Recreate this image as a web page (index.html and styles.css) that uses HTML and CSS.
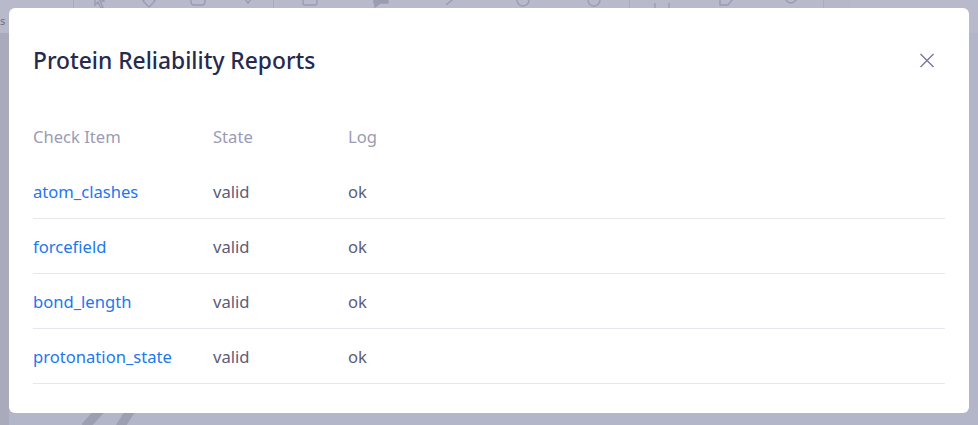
FILE: index.html
```html
<!DOCTYPE html>
<html lang="en">
<head>
  <meta charset="UTF-8" />
  <meta name="viewport" content="width=device-width, initial-scale=1.0"/>
  <title>Protein Reliability Reports</title>
  <link rel="stylesheet" href="styles.css">
</head>
<body>

  <!-- App behind the dialog -->
  <div class="app">
    <div class="toolbar">
      <div class="side-tab">s</div>
      <div class="tool-group first">
        <svg class="tool" viewBox="0 0 20 20"><path d="M6 2 L6 14 L9 11 L12 17 L14 16 L11 10 L15 10 Z"/></svg>
        <svg class="tool" viewBox="0 0 20 20"><path d="M4 10 L10 4 L16 10 L10 16 Z"/></svg>
        <svg class="tool" viewBox="0 0 20 20"><rect x="3" y="6" width="14" height="8" rx="3"/></svg>
        <svg class="tool" viewBox="0 0 20 20"><path d="M3 3 L17 3 L10 12 Z"/></svg>
      </div>
      <div class="tool-group second">
        <svg class="tool" viewBox="0 0 20 20"><rect x="3" y="5" width="14" height="9" rx="2"/></svg>
        <svg class="tool filled" viewBox="0 0 20 20"><path d="M3 4 L17 4 L17 12 L9 12 L4 16 L4 12 L3 12 Z"/></svg>
        <svg class="tool" viewBox="0 0 20 20"><path d="M4 14 L16 4"/></svg>
        <svg class="tool" viewBox="0 0 20 20"><circle cx="10" cy="9" r="6"/></svg>
        <svg class="tool" viewBox="0 0 20 20"><circle cx="10" cy="9" r="6"/></svg>
      </div>
      <div class="tool-group third">
        <svg class="tool" viewBox="0 0 20 20"><path d="M3 3 L3 8 M3 3 L8 3 M17 3 L17 8 M17 3 L12 3 M3 17 L3 12 M17 17 L17 12"/></svg>
        <svg class="tool" viewBox="0 0 20 20"><path d="M4 4 L12 4 L16 9 L12 14 L4 14 Z"/></svg>
        <svg class="tool" viewBox="0 0 20 20"><path d="M4 8 Q10 16 16 8 Q10 2 4 8"/></svg>
      </div>
      <div class="tool-group tail"></div>
    </div>
    <div class="canvas">
      <div class="side-panel"></div>
      <svg class="bonds" viewBox="0 0 160 40">
        <path d="M85 42 L110 14"/>
        <path d="M120 42 L138 14"/>
      </svg>
    </div>
  </div>

  <!-- Dialog -->
  <div class="modal">
    <div class="modal-header">
      <h2>Protein Reliability Reports</h2>
      <button class="close" aria-label="Close">
        <svg viewBox="0 0 16 16"><path d="M1.5 1.5 L14.5 14.5 M14.5 1.5 L1.5 14.5"/></svg>
      </button>
    </div>
    <table class="report">
      <thead>
        <tr><th class="col-item">Check Item</th><th class="col-state">State</th><th>Log</th></tr>
      </thead>
      <tbody>
        <tr><td><a href="#">atom_clashes</a></td><td>valid</td><td>ok</td></tr>
        <tr><td><a href="#">forcefield</a></td><td>valid</td><td>ok</td></tr>
        <tr><td><a href="#">bond_length</a></td><td>valid</td><td>ok</td></tr>
        <tr><td><a href="#">protonation_state</a></td><td>valid</td><td>ok</td></tr>
      </tbody>
    </table>
  </div>

</body>
</html>
```

FILE: styles.css
```css
body {
  font-family: "Noto Sans", "Open Sans", sans-serif;
  background-color: #b3b5c8;
  margin: 0;
  padding: 0;
  height: 425px;
  overflow: hidden;
}

.app {
  height: 100%;
  display: flex;
  flex-direction: column;
}

.toolbar {
  height: 33px;
  display: flex;
  background-color: #b8bacb;
}

.side-tab {
  width: 9px;
  color: #6f7186;
  font-size: 11px;
  padding-top: 13px;
  overflow: hidden;
}

.tool-group {
  display: flex;
  justify-content: space-around;
  box-sizing: border-box;
  border-right: 1px solid #a9abbe;
  margin-top: -9px;
  height: 30px;
}

.tool-group.first {
  margin-left: 64px;
  width: 201px;
  border-left: 1px solid #a9abbe;
}

.tool-group.second {
  width: 356px;
}

.tool-group.third {
  width: 194px;
}

.tool-group.tail {
  width: 27px;
  border-right: none;
  background-color: #b6b8c9;
}

.tool {
  width: 20px;
  height: 20px;
  fill: none;
  stroke: #9a9cb2;
  stroke-width: 1.4;
}

.tool.filled {
  fill: #9a9cb2;
}

.canvas {
  flex: 1;
  position: relative;
}

.side-panel {
  width: 9px;
  height: 100%;
  background-color: #a9abbd;
}

.bonds {
  position: absolute;
  left: 0;
  bottom: 0;
  width: 160px;
  height: 40px;
  fill: none;
  stroke: #9c9eb1;
  stroke-width: 9;
}

/* Dialog */
.modal {
  position: absolute;
  top: 8px;
  left: 9px;
  width: 960px;
  height: 405px;
  box-sizing: border-box;
  background-color: white;
  border-radius: 6px;
  padding: 0 24px;
}

.modal-header {
  display: flex;
  align-items: center;
  justify-content: space-between;
  padding-top: 36px;
  height: 34px;
}

.modal-header h2 {
  margin: 0;
  font-size: 22.8px;
  font-weight: 500;
  color: #262a4d;
  line-height: 34px;
}

.close {
  background: none;
  border: none;
  padding: 0;
  margin-right: 9px;
  width: 18px;
  height: 18px;
  cursor: pointer;
}

.close svg {
  width: 16px;
  height: 17px;
  stroke: #7c7e9c;
  stroke-width: 1.5;
}

.report {
  width: 100%;
  margin-top: 31px;
  border-collapse: collapse;
  font-size: 16.6px;
}

.report th {
  text-align: left;
  font-weight: 400;
  color: #9a9bb4;
  height: 55px;
  padding: 0;
}

.report .col-item {
  width: 180px;
}

.report .col-state {
  width: 135px;
}

.report td {
  height: 54px;
  padding: 0;
  color: #5c5d7a;
  border-bottom: 1px solid #e6e6f1;
}

.report a {
  color: #1d77ef;
  text-decoration: none;
}
```
